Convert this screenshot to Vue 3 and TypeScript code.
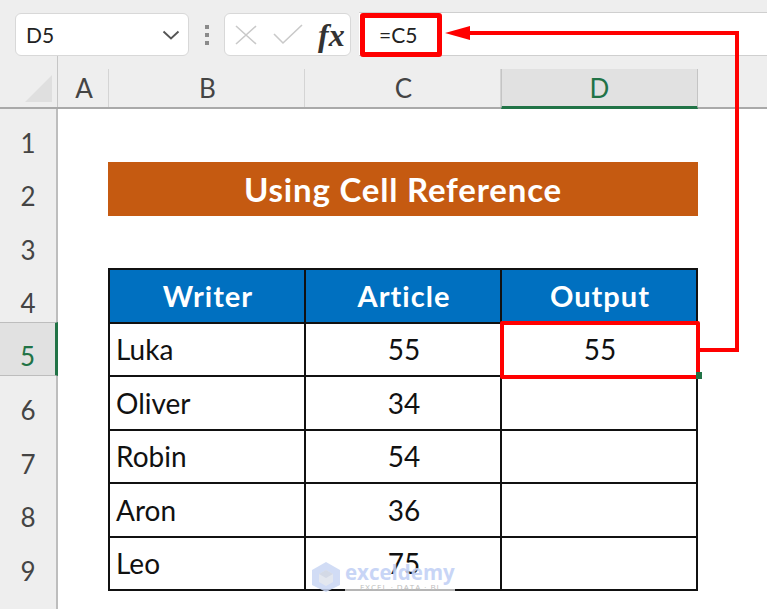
<script setup lang="ts">
const columns = [
  { label: 'A', width: 51 },
  { label: 'B', width: 196 },
  { label: 'C', width: 196 },
  { label: 'D', width: 197, active: true },
]
const rows = [
  { n: 1, h: 53 }, { n: 2, h: 54 }, { n: 3, h: 53 }, { n: 4, h: 53 }, { n: 5, h: 54, active: true },
  { n: 6, h: 54 }, { n: 7, h: 53 }, { n: 8, h: 54 }, { n: 9, h: 53 },
]
const data = [
  { writer: 'Luka', article: 55, output: '55' },
  { writer: 'Oliver', article: 34, output: '' },
  { writer: 'Robin', article: 54, output: '' },
  { writer: 'Aron', article: 36, output: '' },
  { writer: 'Leo', article: 75, output: '' },
]
</script>

<template>
  <div class="app">
    <div class="toolbar">
      <div class="namebox">
        <span>D5</span>
        <svg width="18" height="10" viewBox="0 0 18 10"><path d="M1.5 1.5 9 8.5l7.5-7" fill="none" stroke="#555" stroke-width="1.9" /></svg>
      </div>
      <div class="dots"><i></i><i></i><i></i></div>
      <div class="fxbox">
        <svg width="22" height="20" viewBox="0 0 22 20"><path d="M1 1 21 19M21 1 1 19" stroke="#c9c9c9" stroke-width="1.6" fill="none" /></svg>
        <svg width="30" height="21" viewBox="0 0 30 21"><path d="M1 10 10 19 29 1" stroke="#c9c9c9" stroke-width="1.6" fill="none" /></svg>
        <span class="fx">fx</span>
      </div>
      <div class="formula"><span>=C5</span></div>
    </div>

    <div class="colheads">
      <div class="corner"><svg width="28" height="28" viewBox="0 0 28 28"><path d="M27 0V27H0Z" fill="#dfdfdf" /></svg></div>
      <div v-for="c in columns" :key="c.label" class="colhead" :class="{ active: c.active }" :style="{ width: c.width + 'px' }">{{ c.label }}</div>
    </div>

    <div class="sheet">
      <div class="rowheads">
        <div v-for="r in rows" :key="r.n" class="rowhead" :class="{ active: r.active }" :style="{ height: r.h + 'px' }">{{ r.n }}</div>
      </div>
      <div class="content">
        <div class="title">Using Cell Reference</div>
        <div class="table">
          <div class="cell head">Writer</div>
          <div class="cell head">Article</div>
          <div class="cell head">Output</div>
          <template v-for="d in data" :key="d.writer">
            <div class="cell name">{{ d.writer }}</div>
            <div class="cell">{{ d.article }}</div>
            <div class="cell">{{ d.output }}</div>
          </template>
        </div>
      </div>
    </div>

    <div class="cell-mark"></div>
    <div class="handle"></div>
    <div class="formula-mark"></div>
    <svg class="arrow" width="767" height="609" viewBox="0 0 767 609">
      <path d="M699 350H737V33H462" fill="none" stroke="#ff0000" stroke-width="4" />
      <path d="M445 33 470 26V40Z" fill="#ff0000" />
    </svg>

    <div class="watermark">
      <svg width="30" height="32" viewBox="0 0 30 32">
        <path d="M15 1 29 9V24L15 31 1 24V9Z" fill="#c9d6f3" opacity=".85" />
        <path d="M15 9 22 13V21L15 25 8 21V13Z" fill="#e3e7ef" />
        <path d="M15 9 22 13 15 17 8 13Z" fill="#d3d9e6" />
      </svg>
      <div class="mark-text">
        <span class="mark-name">exceldemy</span>
        <span class="mark-sub">EXCEL · DATA · BI</span>
      </div>
    </div>
  </div>
</template>

<style>
html, body { margin: 0; background: #fff; }
</style>

<style scoped>
.app {
  position: relative;
  width: 767px;
  height: 609px;
  overflow: hidden;
  font-family: Lato, "Liberation Sans", sans-serif;
  color: #111;
  background: #fff;
}
.toolbar {
  position: relative;
  display: flex;
  align-items: flex-start;
  height: 55px;
  box-sizing: border-box;
  padding: 13px 0 0 15px;
  background: #eeeeee;
}
.namebox, .fxbox {
  box-sizing: border-box;
  height: 43px;
  display: flex;
  align-items: center;
  background: #fff;
  border: 1px solid #d8d8d8;
  border-radius: 6px;
}
.namebox {
  width: 174px;
  justify-content: space-between;
  padding: 0 8px 0 10px;
  font-size: 21px;
  color: #222;
}
.dots {
  width: 35px;
  height: 43px;
  display: flex;
  flex-direction: column;
  align-items: center;
  justify-content: center;
  gap: 4px;
}
.dots i {
  width: 4px;
  height: 4px;
  background: #8a8a8a;
}
.fxbox {
  width: 127px;
  gap: 16px;
  padding-left: 10px;
}
.fx {
  font-family: "Liberation Serif", serif;
  font-style: italic;
  font-weight: 700;
  font-size: 32px;
  line-height: 1;
  color: #333;
  margin-left: -1px;
}
.formula {
  position: absolute;
  left: 359px;
  right: 0;
  top: 12px;
  height: 44px;
  box-sizing: border-box;
  background: #fff;
  border-top: 1px solid #cfcfcf;
  border-bottom: 1px solid #cfcfcf;
  display: flex;
  align-items: center;
  padding-left: 20px;
  font-size: 21px;
  color: #222;
}
.colheads {
  display: flex;
  height: 54px;
  background: #eeeeee;
  box-sizing: border-box;
  border-bottom: 2px solid #a9a9a9;
}
.corner {
  width: 58px;
  flex: none;
  box-sizing: border-box;
  border-right: 1px solid #c6c6c6;
  padding: 20px 0 0 25px;
}
.colhead {
  box-sizing: border-box;
  flex: none;
  margin-top: 14px;
  padding-left: 2px;
  display: flex;
  align-items: center;
  justify-content: center;
  border-right: 1px solid #d4d4d4;
  font-size: 26px;
  color: #444;
}
.colhead.active {
  padding-left: 0;
  margin-bottom: -2px;
  background: #e1e1e1;
  border-left: 1px solid #c4c4c4;
  border-right: 1px solid #c4c4c4;
  border-bottom: 3px solid #217346;
  color: #217346;
}
.sheet {
  display: flex;
  height: 500px;
}
.rowheads {
  width: 58px;
  flex: none;
  box-sizing: border-box;
  background: #eeeeee;
  border-right: 2px solid #bdbdbd;
}
.rowhead {
  box-sizing: border-box;
  display: flex;
  align-items: center;
  justify-content: center;
  padding-top: 14px;
  font-size: 26px;
  color: #444;
}
.rowhead.active {
  margin-right: -2px;
  background: #e1e1e1;
  border-top: 1px solid #bdbdbd;
  border-bottom: 1px solid #bdbdbd;
  border-right: 3px solid #217346;
  color: #217346;
}
.content {
  padding: 53px 0 0 50px;
}
.title {
  width: 590px;
  height: 54px;
  display: flex;
  align-items: center;
  justify-content: center;
  background: #c55a11;
  color: #fff;
  font-size: 33px;
  letter-spacing: .8px;
  font-weight: 700;
}
.table {
  margin: 52px 0 0;
  width: 590px;
  box-sizing: border-box;
  display: grid;
  grid-template-columns: 196px 196px 196px;
  grid-auto-rows: 53.5px;
  border-top: 2px solid #111;
  border-left: 2px solid #111;
}
.cell {
  box-sizing: border-box;
  display: flex;
  align-items: center;
  justify-content: center;
  padding-left: 2px;
  border-right: 2px solid #111;
  border-bottom: 2px solid #111;
  font-size: 28px;
}
.cell.head {
  background: #0070c0;
  color: #fff;
  font-weight: 700;
  font-size: 29px;
  letter-spacing: 1px;
}
.cell.name {
  justify-content: flex-start;
  padding-left: 6px;
}
.cell-mark {
  position: absolute;
  left: 500px;
  top: 321px;
  width: 200px;
  height: 58px;
  box-sizing: border-box;
  border: 4px solid #ff0000;
  border-radius: 2px;
}
.handle {
  position: absolute;
  left: 696px;
  top: 372px;
  width: 6px;
  height: 7px;
  background: #217346;
}
.formula-mark {
  position: absolute;
  left: 360px;
  top: 13px;
  width: 82px;
  height: 44px;
  box-sizing: border-box;
  border: 5px solid #ff0000;
  border-radius: 3px;
}
.arrow {
  position: absolute;
  left: 0;
  top: 0;
  pointer-events: none;
}
.watermark {
  position: absolute;
  left: 311px;
  top: 561px;
  display: flex;
  gap: 4px;
  align-items: flex-start;
}
.mark-text {
  display: flex;
  flex-direction: column;
  align-items: center;
}
.mark-name {
  font-family: "Open Sans", sans-serif;
  font-weight: 700;
  font-size: 20.5px;
  line-height: 22px;
  color: #c3d1f6;
  opacity: .9;
}
.mark-sub {
  font-family: "Open Sans", sans-serif;
  font-size: 8px;
  line-height: 8px;
  letter-spacing: 1px;
  color: #bdbdbd;
  background: #ffffffb0;
  width: 100%;
  text-align: center;
}
</style>
